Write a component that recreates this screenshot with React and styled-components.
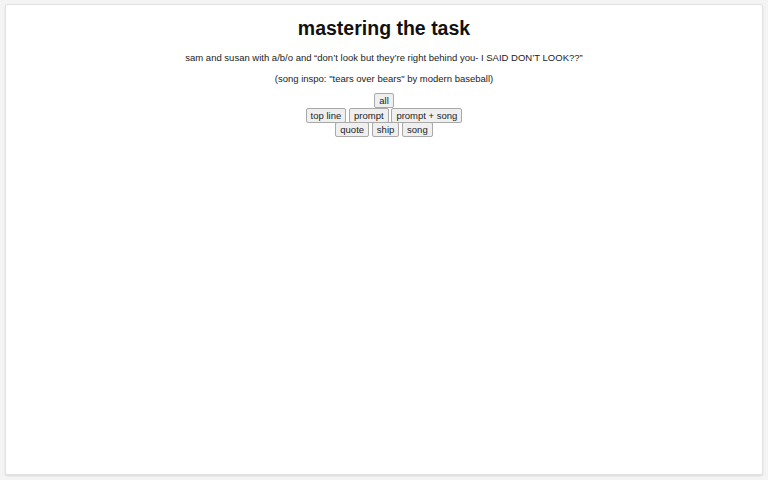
import React from "react";
import styled, { createGlobalStyle } from "styled-components";

const Global = createGlobalStyle`
  html, body { margin: 0; padding: 0; }
  body {
    background: #f4f4f4;
    font-family: "Liberation Sans", Arial, sans-serif;
    color: #111;
  }
`;

const Page = styled.div`
  padding: 4px 5px 5px 5px;
  height: 480px;
  box-sizing: border-box;
  display: flex;
`;

const Card = styled.main`
  flex: 1;
  background: #fff;
  border: 1px solid #e2e2e2;
  box-shadow: 0 1px 2px rgba(0, 0, 0, 0.12);
  border-radius: 2px;
  text-align: center;
  padding-top: 12px;
`;

const Title = styled.h1`
  margin: 0 0 12px;
  font-size: 19.5px;
  line-height: 22px;
  font-weight: bold;
  color: #111;
`;

const Note = styled.p`
  margin: 0 0 8px;
  font-size: 9.5px;
  line-height: 13px;
  color: #222;
`;

const Filters = styled.div`
  margin-top: 8px;
`;

const FilterRow = styled.div`
  font-size: 10px;
  line-height: 14.5px;
  height: 14.5px;
`;

const FilterButton = styled.button`
  font-family: "Liberation Sans", Arial, sans-serif;
  font-size: 9.5px;
  line-height: 11px;
  padding: 1px 4px;
  margin: 0;
  color: #222;
  background: #efefef;
  border: 1px solid #a9a9a9;
  border-radius: 2px;
  vertical-align: top;
`;

const rows = [["all"], ["top line", "prompt", "prompt + song"], ["quote", "ship", "song"]];

export default function App() {
  return (
    <>
      <Global />
      <Page>
        <Card>
          <Title>mastering the task</Title>
          <Note>sam and susan with a/b/o and “don’t look but they’re right behind you- I SAID DON’T LOOK??”</Note>
          <Note>(song inspo: "tears over bears" by modern baseball)</Note>
          <Filters>
            {rows.map((row, i) => (
              <FilterRow key={i}>
                {row.map((label, j) => (
                  <React.Fragment key={label}>
                    {j > 0 && " "}
                    <FilterButton>{label}</FilterButton>
                  </React.Fragment>
                ))}
              </FilterRow>
            ))}
          </Filters>
        </Card>
      </Page>
    </>
  );
}
